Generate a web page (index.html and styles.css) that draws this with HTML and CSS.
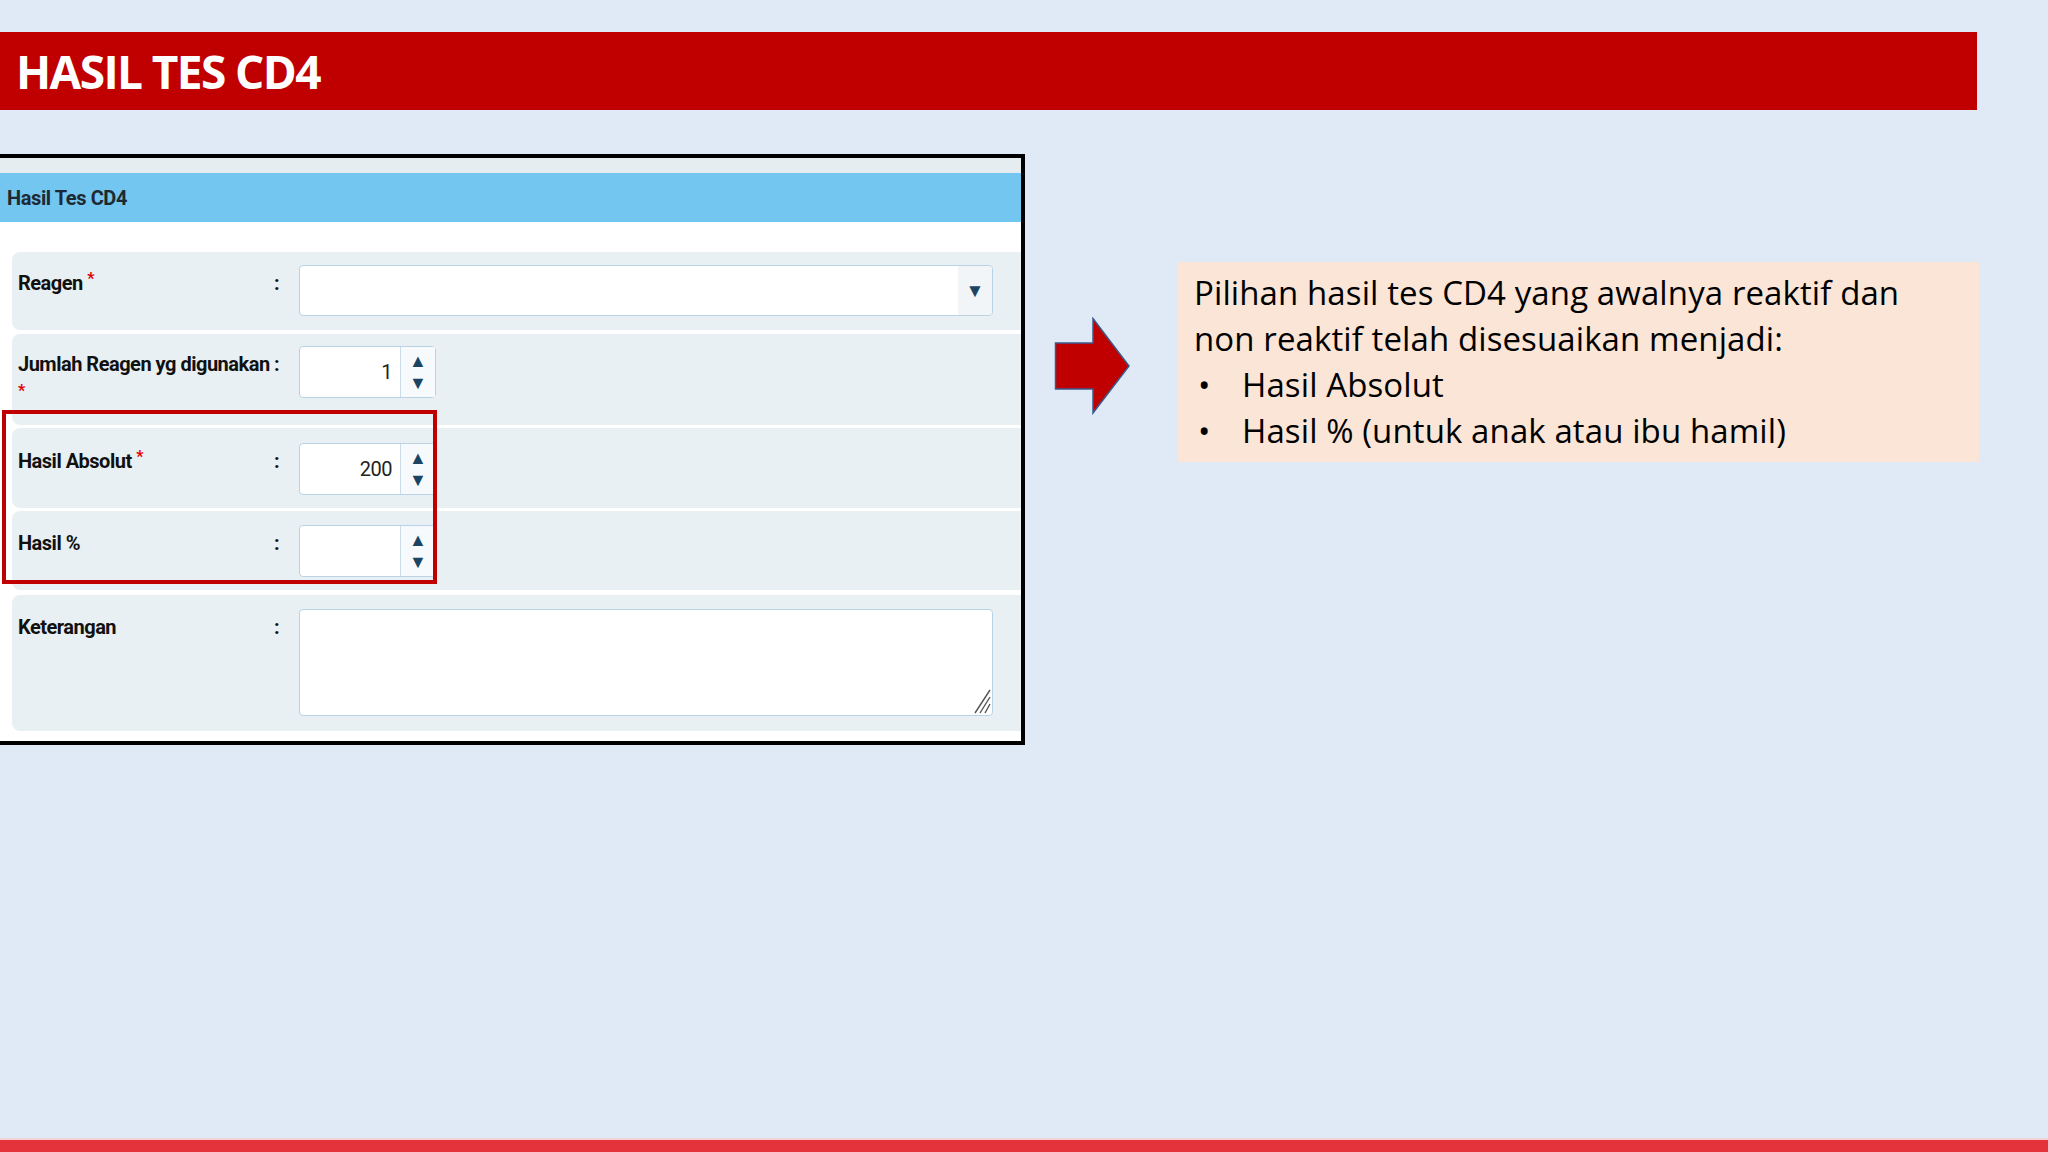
FILE: index.html
```html
<!DOCTYPE html>
<html>
<head>
<meta charset="utf-8">
<link rel="stylesheet" href="styles.css">
</head>
<body>
<div class="slide">
  <div class="titlebar"><h1 class="title">HASIL TES CD4</h1></div>
  <div class="content">
    <div class="panel">
      <div class="panel-top"></div>
      <div class="panel-head">Hasil Tes CD4</div>
      <div class="panel-gap"></div>
      <div class="rows">
        <div class="row row-reagen">
          <div class="label">Reagen <span class="req">*</span></div>
          <div class="colon">:</div>
          <div class="select"><div class="select-arrow">▼</div></div>
        </div>
        <div class="row row-jumlah">
          <div class="label">Jumlah Reagen yg digunakan<br><span class="req">*</span></div>
          <div class="colon">:</div>
          <div class="num"><div class="num-val">1</div><div class="spin"><span>▲</span><span>▼</span></div></div>
        </div>
        <div class="row row-abs">
          <div class="label">Hasil Absolut <span class="req">*</span></div>
          <div class="colon">:</div>
          <div class="num"><div class="num-val">200</div><div class="spin"><span>▲</span><span>▼</span></div></div>
        </div>
        <div class="row row-pct">
          <div class="label">Hasil %</div>
          <div class="colon">:</div>
          <div class="num"><div class="num-val"></div><div class="spin"><span>▲</span><span>▼</span></div></div>
        </div>
        <div class="row row-ket">
          <div class="label">Keterangan</div>
          <div class="colon">:</div>
          <div class="textarea">
            <svg class="grip" width="22" height="26" viewBox="0 0 22 26"><path d="M21 2 L6 25 M21 9 L11 25 M21 16 L16 25" stroke="#555" stroke-width="1.4" fill="none"/></svg>
          </div>
        </div>
      </div>
      <div class="highlight"></div>
    </div>
    <svg class="arrow" width="78" height="99" viewBox="0 0 78 99">
      <polygon points="1.5,26 39,26 39,1.5 75,49 39,96 39,72 1.5,72" fill="#c00000" stroke="#3b5a8c" stroke-width="1.5"/>
    </svg>
    <div class="note">
      <p class="note-line">Pilihan hasil tes CD4 yang awalnya reaktif dan</p>
      <p class="note-line">non reaktif telah disesuaikan menjadi:</p>
      <ul class="note-list">
        <li>Hasil Absolut</li>
        <li>Hasil % (untuk anak atau ibu hamil)</li>
      </ul>
    </div>
  </div>
  <div class="footer"></div>
</div>
</body>
</html>
```

FILE: styles.css
```css
html, body {
  margin: 0;
  padding: 0;
}
body {
  width: 2048px;
  height: 1152px;
  overflow: hidden;
  background: #dfeaf6;
}
.slide {
  width: 2048px;
  height: 1152px;
  display: flex;
  flex-direction: column;
}
.titlebar {
  margin-top: 32px;
  width: 1977px;
  height: 78px;
  background: #c00000;
  display: flex;
  align-items: center;
  padding-left: 16px;
  box-sizing: border-box;
}
.title {
  margin: 0;
  color: #fff;
  font-family: "Open Sans", "Liberation Sans", sans-serif;
  font-weight: 700;
  font-size: 46px;
  letter-spacing: -1.6px;
  line-height: 1;
}
.content {
  margin-top: 44px;
  display: flex;
  align-items: flex-start;
}
.panel {
  position: relative;
  width: 1025px;
  height: 591px;
  box-sizing: border-box;
  border: 4px solid #000;
  border-left: none;
  background: #fff;
  display: flex;
  flex-direction: column;
  font-family: "Roboto", "Liberation Sans", sans-serif;
}
.panel-top {
  height: 15px;
  background: #e6edf1;
}
.panel-head {
  height: 49px;
  background: #73c6ef;
  display: flex;
  align-items: center;
  padding-left: 7px;
  font-weight: 700;
  font-size: 20px;
  letter-spacing: -0.4px;
  color: #1d2a33;
}
.panel-gap {
  height: 30px;
}
.rows {
  display: flex;
  flex-direction: column;
  gap: 4px;
  padding-left: 12px;
}
.row {
  display: flex;
  align-items: flex-start;
  background: #e8f0f3;
  border-radius: 8px 0 0 8px;
  box-sizing: border-box;
  padding: 13px 0 0 6px;
}
.row-reagen { height: 78px; }
.row-jumlah { height: 91px; padding-top: 12px; }
.row-abs { height: 80px; padding-top: 15px; margin-top: -1px; }
.row-pct { height: 79px; padding-top: 14px; margin-top: -1px; }
.row-ket { height: 136px; padding-top: 14px; margin-top: 1px; }
.label {
  width: 256px;
  margin-top: 6px;
  font-weight: 700;
  font-size: 20px;
  letter-spacing: -0.5px;
  line-height: 24px;
  color: #111;
}
.req {
  color: #e00000;
  font-size: 16px;
  vertical-align: top;
  line-height: 16px;
}
.row-jumlah .req { line-height: 30px; }
.colon {
  width: 25px;
  margin-top: 6px;
  font-weight: 700;
  font-size: 20px;
  line-height: 24px;
  color: #111;
}
.select {
  width: 694px;
  height: 51px;
  background: #fff;
  border: 1px solid #b9d3e4;
  border-radius: 4px;
  box-sizing: border-box;
  display: flex;
  justify-content: flex-end;
}
.select-arrow {
  width: 34px;
  background: #f1f5f8;
  display: flex;
  align-items: center;
  justify-content: center;
  font-size: 19px;
  color: #1b4462;
  border-radius: 0 4px 4px 0;
}
.num {
  width: 137px;
  height: 52px;
  background: #fff;
  border: 1px solid #b9d3e4;
  border-radius: 4px;
  box-sizing: border-box;
  display: flex;
}
.num-val {
  flex: 1;
  text-align: right;
  padding-right: 8px;
  font-size: 20px;
  font-weight: 400;
  letter-spacing: -0.5px;
  line-height: 50px;
  color: #222;
}
.spin {
  width: 34px;
  border-left: 1px solid #c9dce8;
  background: #f7fafc;
  display: flex;
  flex-direction: column;
  align-items: center;
  justify-content: center;
  gap: 4px;
  font-size: 18px;
  line-height: 18px;
  color: #1b4462;
}
.textarea {
  position: relative;
  width: 694px;
  height: 107px;
  background: #fff;
  border: 1px solid #b9d3e4;
  border-radius: 4px;
  box-sizing: border-box;
}
.grip {
  position: absolute;
  right: 1px;
  bottom: 1px;
}
.highlight {
  position: absolute;
  left: 2px;
  top: 252px;
  width: 435px;
  height: 174px;
  border: 4px solid #c00000;
  box-sizing: border-box;
}
.arrow {
  margin-left: 29px;
  margin-top: 163px;
  flex: none;
}
.note {
  margin-left: 46px;
  margin-top: 108px;
  width: 801px;
  height: 200px;
  box-sizing: border-box;
  background: #fbe5d6;
  padding: 8px 0 0 16px;
  font-family: "Open Sans", "Liberation Sans", sans-serif;
  font-size: 33px;
  line-height: 46px;
  letter-spacing: 0.1px;
  color: #000;
}
.note-line {
  margin: 0;
}
.note-list {
  margin: 0;
  padding: 0;
  list-style: none;
}
.note-list li {
  position: relative;
  padding-left: 48px;
}
.note-list li::before {
  content: "•";
  position: absolute;
  left: 4px;
}
.footer {
  margin-top: auto;
  height: 14px;
  border-top: 2px solid #f3d4d6;
  background: #e5333c;
  box-sizing: border-box;
}
```
